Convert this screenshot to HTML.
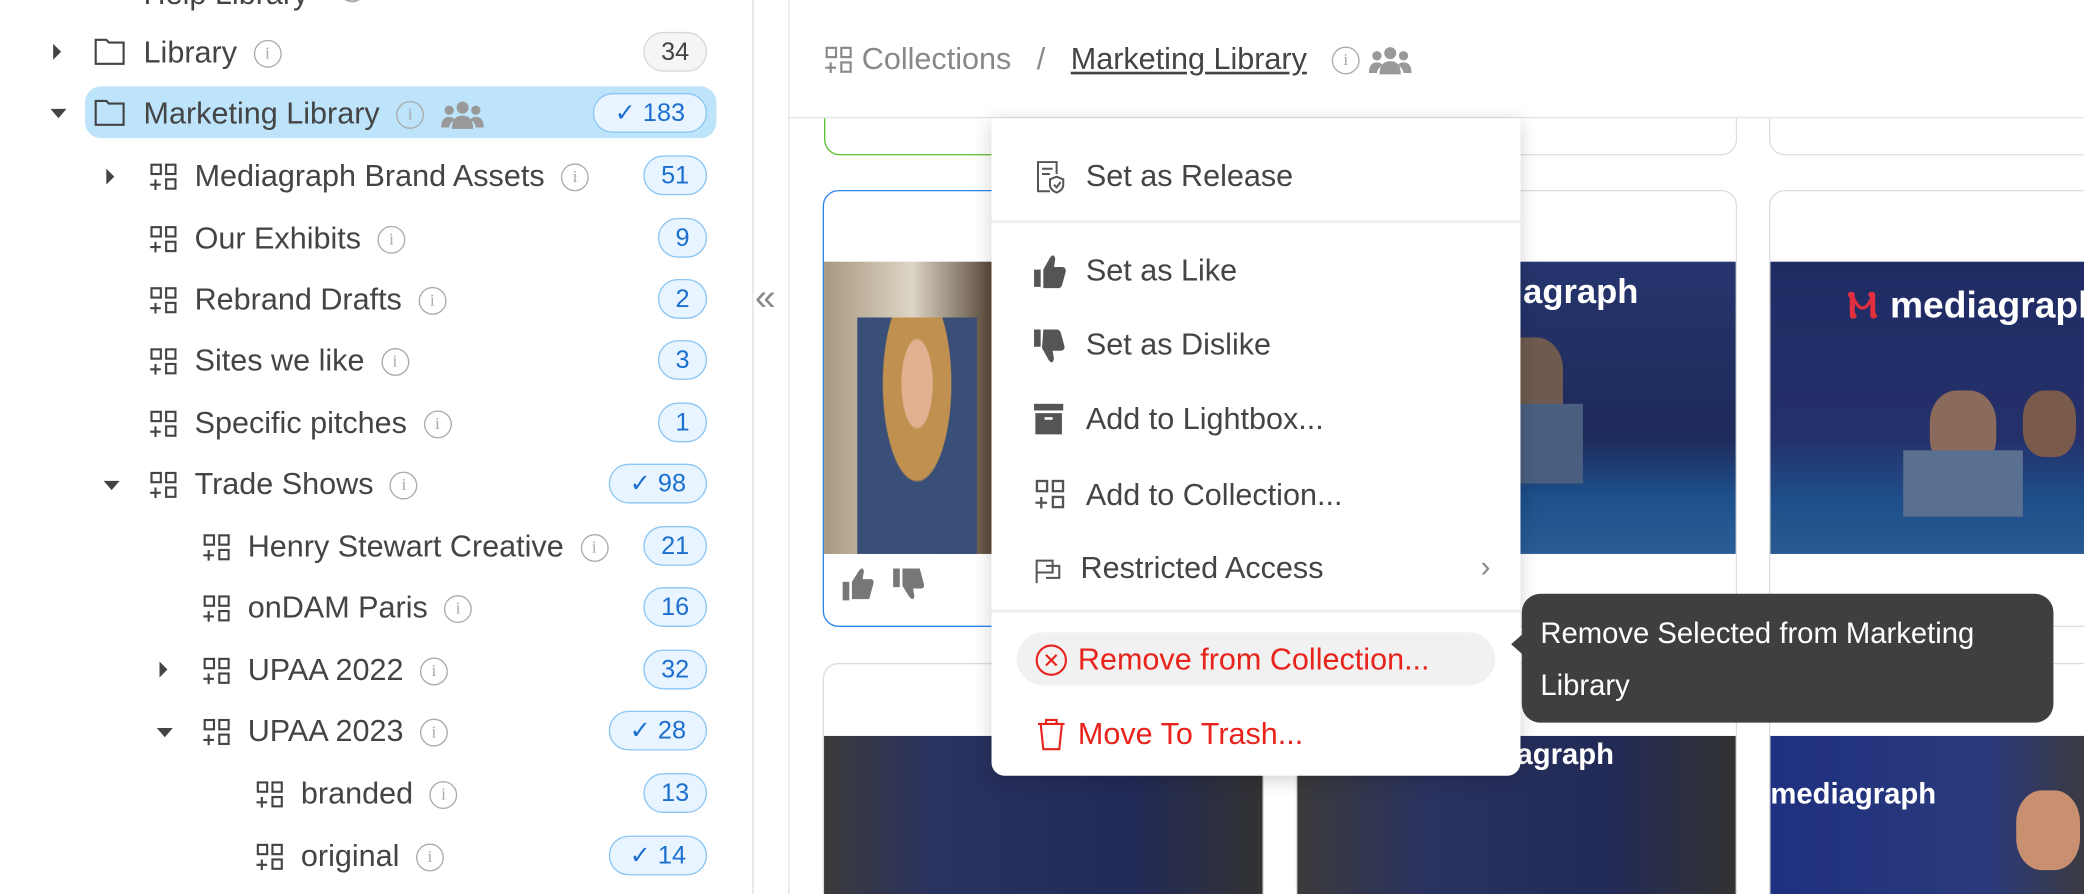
<!DOCTYPE html>
<html><head><meta charset="utf-8"><style>
html,body{margin:0;padding:0;width:2084px;height:894px;overflow:hidden;background:#fff;}
#s{position:absolute;left:0;top:0;width:1568px;height:673px;transform:scale(1.32908,1.3284);transform-origin:0 0;font-family:"Liberation Sans",sans-serif;color:#444;overflow:hidden;}
.a{position:absolute;}
.row{position:absolute;height:40px;line-height:40px;font-size:23px;white-space:nowrap;}
.ic{display:inline-block;vertical-align:middle;}
.badge{position:absolute;right:1036px;height:30px;line-height:30px;border-radius:16px;font-size:19px;text-align:center;box-sizing:border-box;padding:0 10px;}
.bb{background:#e8f4ff;border:1.5px solid #8cc6f2;color:#1b6fcf;}
.bg{background:#f5f5f5;border:1.5px solid #d8d8d8;color:#444;}
.info{display:inline-block;width:21px;height:21px;border:1.6px solid #aaa;border-radius:50%;box-sizing:border-box;color:#aaa;font-size:13px;line-height:18px;text-align:center;vertical-align:middle;font-family:"Liberation Serif",serif;margin-left:6px;}
.card{position:absolute;border:1px solid #ddd;border-radius:12px;background:#fff;overflow:hidden;}
.img{position:absolute;}
.mi{position:absolute;left:0;width:398px;height:44px;line-height:44px;font-size:23px;color:#444;}
.mi svg{position:absolute;left:32px;top:10px;}
.mi span{position:absolute;left:71px;}
</style></head><body><div id="s">

<div class="card" style="left:620px;top:40px;width:330px;height:75px;border:1.5px solid #5ac02a"></div>
<div class="card" style="left:975px;top:40px;width:330px;height:75px"></div>
<div class="card" style="left:1331px;top:40px;width:330px;height:75px"></div>

<div class="card" style="left:619px;top:143px;width:330px;height:327px;border:1.5px solid #2a86ee">
 <div class="img" style="left:0;top:53px;width:330px;height:220px;background:linear-gradient(90deg,#a89880 0%,#ddd5c5 20%,#5a4a3a 38%,#9a8060 55%,#3a4a6a 75%,#8a7a6a 100%)"></div>
 <div class="img" style="left:25px;top:95px;width:90px;height:178px;background:radial-gradient(ellipse at 50% 28%,#e0b090 0 18%,#c09050 19% 40%,#3a4f78 41%);"></div>
 <svg class="a" style="left:12px;top:282px" width="70" height="28"><g fill="#777"><path d="M2 12h5v14H2z M9 12 l5-8 q3-4 4 0 l-1 6 h6 q3 0 2 4 l-3 11 h-13z"/><path d="M40 2h5v14h-5z M47 2h13 l3 11 q1 4-2 4 h-6 l1 6 q-1 4-4 0 l-5-8z"/></g></svg>
</div>
<div class="card" style="left:975px;top:143px;width:330px;height:327px">
 <div class="img" style="left:0;top:53px;width:330px;height:220px;background:linear-gradient(180deg,#26356e 0%,#1e2a5a 60%,#1d4f8a 80%,#2b5d96 100%)"></div>
 <div class="img" style="left:150px;top:110px;width:50px;height:60px;border-radius:40% 40% 10% 10%;background:#6e5a4e"></div>
 <div class="img" style="left:140px;top:160px;width:75px;height:60px;background:#4a5f80"></div>
 <div class="img" style="left:170px;top:60px;color:#fff;font-size:26px;font-weight:bold">agraph</div>
</div>
<div class="card" style="left:1331px;top:143px;width:330px;height:327px">
 <div class="img" style="left:0;top:53px;width:330px;height:220px;background:linear-gradient(180deg,#1f2c64 0%,#25306a 60%,#1e4f8a 82%,#2a5a92 100%)"></div>
 <div class="img" style="left:90px;top:70px;color:#fff;font-size:28px;font-weight:bold">mediagraph</div>
 <div class="img" style="left:58px;top:70px;color:#e03040;font-size:28px;font-weight:bold">Ⲙ</div>
 <div class="img" style="left:120px;top:150px;width:50px;height:60px;border-radius:40%;background:#8a6a5a"></div>
 <div class="img" style="left:100px;top:195px;width:90px;height:50px;background:#5a7090"></div>
 <div class="img" style="left:190px;top:150px;width:40px;height:50px;border-radius:40%;background:#7a5a4a"></div>
</div>

<div class="card" style="left:619px;top:499px;width:330px;height:200px">
 <div class="img" style="left:0;top:54px;width:330px;height:150px;background:linear-gradient(90deg,#3a3a3a 0%,#2a3260 25%,#222a58 70%,#333 100%)"></div>
</div>
<div class="card" style="left:975px;top:499px;width:330px;height:200px">
 <div class="img" style="left:0;top:54px;width:330px;height:150px;background:linear-gradient(90deg,#3a3a3a 0%,#2a3260 30%,#222a58 70%,#333 100%)"></div>
 <div class="img" style="left:165px;top:55px;color:#fff;font-size:22px;font-weight:bold">agraph</div>
</div>
<div class="card" style="left:1331px;top:499px;width:330px;height:200px">
 <div class="img" style="left:0;top:54px;width:330px;height:150px;background:linear-gradient(90deg,#1f3080 0%,#2a3a7a 50%,#3a3a45 70%,#3a3a45 100%)"></div>
 <div class="img" style="left:0;top:85px;color:#fff;font-size:22px;font-weight:bold">mediagraph</div>
 <div class="img" style="left:185px;top:95px;width:48px;height:60px;border-radius:40%;background:#c89070"></div>
</div>

<div class="a" style="left:594px;top:0;width:974px;height:88px;background:#fff;border-bottom:1px solid #e4e4e4"></div>
<div class="row" style="left:620px;top:24px;color:#888"><svg class="ic" width="22" height="21"><g fill="none" stroke="#888" stroke-width="1.6"><rect x="2" y="1" width="7" height="7"/><rect x="13" y="1" width="7" height="7"/><rect x="13" y="12" width="7" height="7"/><path d="M1 16 h8 M5 12 v8"/></g></svg> Collections &nbsp; / &nbsp; <span style="color:#444;text-decoration:underline">Marketing Library</span> &nbsp;<span class="info">i</span> <svg class="ic" width="34" height="22" viewBox="0 0 34 22"><g fill="#999"><circle cx="17" cy="5" r="4.5"/><circle cx="7" cy="7" r="3.5"/><circle cx="27" cy="7" r="3.5"/><path d="M9 21 q0-10 8-10 q8 0 8 10z"/><path d="M1 20 q0-8 6-8 q3 0 4 2 q-4 3-4 6z M33 20 q0-8-6-8 q-3 0-4 2 q4 3 4 6z"/></g></svg></div>

<div class="a" style="left:0;top:0;width:566px;height:673px;background:#fff"></div>
<div class="a" style="left:566px;top:0;width:1px;height:673px;background:#ddd"></div>
<div class="a" style="left:567px;top:0;width:26px;height:673px;background:#fff"></div>
<div class="a" style="left:568px;top:208px;font-size:28px;color:#888">«</div>
<div class="a" style="left:593px;top:0;width:1px;height:673px;background:#e4e4e4"></div>

<div class="a" style="left:64px;top:65px;width:475px;height:39px;background:#bde4fb;border-radius:12px"></div>

<svg class="a" style="left:0;top:0" width="560" height="673">
<g fill="#444">
<path d="M40 33 l6 6 -6 6z"/>
<path d="M38 82 l12 0 -6 7z"/>
<path d="M80 127 l6 6 -6 6z"/>
<path d="M78 362 l12 0 -6 7z"/>
<path d="M120 498 l6 6 -6 6z"/>
<path d="M118 548 l12 0 -6 7z"/>
</g>
<g fill="none" stroke="#444" stroke-width="1.6">
<path d="M72 -12 h20 M72 30 h8 l2 2 h11 v16 h-21z"/>
<path d="M72 76 h8 l2 2 h11 v16 h-21z"/>
</g>
<rect x="297" y="-12" width="16" height="10" fill="#aaa"/>
<circle cx="265" cy="-8" r="9" fill="none" stroke="#aaa" stroke-width="1.6"/>
</svg>

<div class="row" style="left:108px;top:-25px">Help Library</div>
<div class="row" style="left:108px;top:19px">Library <span class="info">i</span></div>
<div class="row" style="left:108px;top:65px">Marketing Library <span class="info">i</span> <svg class="ic" width="34" height="22" viewBox="0 0 34 22" style="margin-left:6px"><g fill="#999"><circle cx="17" cy="5" r="4.5"/><circle cx="7" cy="7" r="3.5"/><circle cx="27" cy="7" r="3.5"/><path d="M9 21 q0-10 8-10 q8 0 8 10z"/><path d="M1 20 q0-8 6-8 q3 0 4 2 q-4 3-4 6z M33 20 q0-8-6-8 q-3 0-4 2 q4 3 4 6z"/></g></svg></div>

<div class="badge bg" style="top:24px;width:48px">34</div>
<div class="badge bb" style="top:70px;width:86px">✓ 183</div>

<svg width="0" height="0" style="position:absolute"><defs>
<g id="col" fill="none" stroke="#444" stroke-width="1.6"><rect x="2" y="1" width="7" height="7"/><rect x="13" y="1" width="7" height="7"/><rect x="13" y="12" width="7" height="7"/><path d="M1 16 h8 M5 12 v8"/></g>
</defs></svg>

<div class="row" style="left:112px;top:112px"><svg class="ic" width="22" height="21"><use href="#col"/></svg> <span style="margin-left:6px">Mediagraph Brand Assets</span> <span class="info">i</span></div>
<div class="badge bb" style="top:117px;width:48px">51</div>
<div class="row" style="left:112px;top:159px"><svg class="ic" width="22" height="21"><use href="#col"/></svg> <span style="margin-left:6px">Our Exhibits</span> <span class="info">i</span></div>
<div class="badge bb" style="top:164px;width:37px">9</div>
<div class="row" style="left:112px;top:205px"><svg class="ic" width="22" height="21"><use href="#col"/></svg> <span style="margin-left:6px">Rebrand Drafts</span> <span class="info">i</span></div>
<div class="badge bb" style="top:210px;width:37px">2</div>
<div class="row" style="left:112px;top:251px"><svg class="ic" width="22" height="21"><use href="#col"/></svg> <span style="margin-left:6px">Sites we like</span> <span class="info">i</span></div>
<div class="badge bb" style="top:256px;width:37px">3</div>
<div class="row" style="left:112px;top:298px"><svg class="ic" width="22" height="21"><use href="#col"/></svg> <span style="margin-left:6px">Specific pitches</span> <span class="info">i</span></div>
<div class="badge bb" style="top:303px;width:37px">1</div>
<div class="row" style="left:112px;top:344px"><svg class="ic" width="22" height="21"><use href="#col"/></svg> <span style="margin-left:6px">Trade Shows</span> <span class="info">i</span></div>
<div class="badge bb" style="top:349px;width:74px">✓ 98</div>
<div class="row" style="left:152px;top:391px"><svg class="ic" width="22" height="21"><use href="#col"/></svg> <span style="margin-left:6px">Henry Stewart Creative</span> <span class="info">i</span></div>
<div class="badge bb" style="top:396px;width:48px">21</div>
<div class="row" style="left:152px;top:437px"><svg class="ic" width="22" height="21"><use href="#col"/></svg> <span style="margin-left:6px">onDAM Paris</span> <span class="info">i</span></div>
<div class="badge bb" style="top:442px;width:48px">16</div>
<div class="row" style="left:152px;top:484px"><svg class="ic" width="22" height="21"><use href="#col"/></svg> <span style="margin-left:6px">UPAA 2022</span> <span class="info">i</span></div>
<div class="badge bb" style="top:489px;width:48px">32</div>
<div class="row" style="left:152px;top:530px"><svg class="ic" width="22" height="21"><use href="#col"/></svg> <span style="margin-left:6px">UPAA 2023</span> <span class="info">i</span></div>
<div class="badge bb" style="top:535px;width:74px">✓ 28</div>
<div class="row" style="left:192px;top:577px"><svg class="ic" width="22" height="21"><use href="#col"/></svg> <span style="margin-left:6px">branded</span> <span class="info">i</span></div>
<div class="badge bb" style="top:582px;width:48px">13</div>
<div class="row" style="left:192px;top:624px"><svg class="ic" width="22" height="21"><use href="#col"/></svg> <span style="margin-left:6px">original</span> <span class="info">i</span></div>
<div class="badge bb" style="top:629px;width:74px">✓ 14</div>

<div class="a" style="left:746px;top:89px;width:398px;height:495px;background:#fff;border-radius:0 0 10px 10px;box-shadow:0 3px 14px rgba(0,0,0,.18)">
 <div class="mi" style="top:21px"><svg width="24" height="26" viewBox="0 0 24 26"><g fill="none" stroke="#555" stroke-width="1.5"><path d="M12 24H3V2h14v9"/><path d="M6 7h8M6 11h6"/><path d="M17 13l5 2v4q0 4-5 6q-5-2-5-6v-4z"/><path d="M15 19l2 2 3-4"/></g></svg><span>Set as Release</span></div>
 <div class="a" style="left:0;top:77px;width:398px;height:2px;background:#eee"></div>
 <div class="mi" style="top:92px"><svg width="24" height="26" viewBox="0 0 24 26"><g fill="#555"><path d="M0 12h5v13H0z M7 12l5-9q3-4 4 1l-1 6h6q3 0 3 3l-3 11q-1 2-3 2H7z"/></g></svg><span>Set as Like</span></div>
 <div class="mi" style="top:148px"><svg width="24" height="26" viewBox="0 0 24 26"><g fill="#555"><path d="M0 1h5v13H0z M7 1h10q2 0 3 2l3 11q0 3-3 3h-6l1 6q-1 5-4 1l-5-9z"/></g></svg><span>Set as Dislike</span></div>
 <div class="mi" style="top:204px"><svg width="24" height="26" viewBox="0 0 24 26"><g fill="#555"><rect x="0" y="1" width="22" height="5"/><path d="M1 8h20v16H1z"/></g><rect x="8" y="11" width="6" height="2" fill="#fff"/></svg><span>Add to Lightbox...</span></div>
 <div class="mi" style="top:261px"><svg width="24" height="26" viewBox="0 0 22 22"><g fill="none" stroke="#555" stroke-width="1.6"><rect x="2" y="1" width="7" height="7"/><rect x="13" y="1" width="7" height="7"/><rect x="13" y="12" width="7" height="7"/><path d="M1 16h8M5 12v8"/></g></svg><span>Add to Collection...</span></div>
 <div class="mi" style="top:316px"><svg width="24" height="26" viewBox="0 0 24 26" style="top:12px"><g fill="none" stroke="#555" stroke-width="1.5"><path d="M2 22V5h12v9H2"/><path d="M9 9h10v9H9"/></g></svg><span style="left:67px">Restricted Access</span><span style="left:368px;color:#888;font-size:22px">›</span></div>
 <div class="a" style="left:0;top:370px;width:398px;height:2px;background:#eee"></div>
 <div class="a" style="left:19px;top:387px;width:360px;height:40px;border-radius:20px;background:#f1f1f1"></div>
 <div class="mi" style="top:385px;color:#e8231c"><svg width="26" height="26" viewBox="0 0 26 26" style="top:10px"><g fill="none" stroke="#e8231c" stroke-width="1.6"><circle cx="13" cy="13" r="11"/><path d="M9 9l8 8M17 9l-8 8"/></g></svg><span style="left:65px">Remove from Collection...</span></div>
 <div class="mi" style="top:441px;color:#e8231c"><svg width="26" height="26" viewBox="0 0 26 26" style="top:10px"><g fill="none" stroke="#e8231c" stroke-width="1.6"><path d="M3 5h20M9 5V2h8v3M5 5l2 19h12l2-19"/></g></svg><span style="left:65px">Move To Trash...</span></div>
</div>

<div class="a" style="left:1145px;top:447px;width:400px;height:97px;background:#3f3f3f;border-radius:14px;color:#fff;font-size:22px;line-height:39px;box-sizing:border-box;padding:10px 14px">Remove Selected from Marketing Library</div>
<div class="a" style="left:1137px;top:477px;width:0;height:0;border-top:8px solid transparent;border-bottom:8px solid transparent;border-right:9px solid #3f3f3f"></div>

</div></body></html>
